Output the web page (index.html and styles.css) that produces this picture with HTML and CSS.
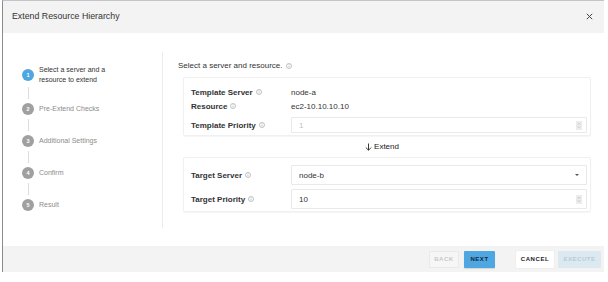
FILE: index.html
```html
<!DOCTYPE html>
<html>
<head>
<meta charset="utf-8">
<link rel="stylesheet" href="styles.css">
</head>
<body>
<div class="dialog">
  <div class="header">
    <span class="title">Extend Resource Hierarchy</span>
    <span class="close"><svg width="7" height="7" viewBox="0 0 7 7"><path d="M0.8 0.8L6.2 6.2M6.2 0.8L0.8 6.2" stroke="#444" stroke-width="1"/></svg></span>
  </div>
  <div class="body">
    <div class="columns">
      <ol class="stepper">
        <li class="step active"><span class="num">1</span><span class="slabel">Select a server and a<br>resource to extend</span></li>
        <li class="connector first"></li>
        <li class="step"><span class="num">2</span><span class="slabel">Pre-Extend Checks</span></li>
        <li class="connector"></li>
        <li class="step"><span class="num">3</span><span class="slabel">Additional Settings</span></li>
        <li class="connector"></li>
        <li class="step"><span class="num">4</span><span class="slabel">Confirm</span></li>
        <li class="connector"></li>
        <li class="step"><span class="num">5</span><span class="slabel">Result</span></li>
      </ol>
      <div class="content">
        <p class="intro">Select a server and resource. <svg class="info" width="6" height="6" viewBox="0 0 6 6"><circle cx="3" cy="3" r="2.5" fill="none" stroke="#999" stroke-width="0.6"/><path d="M3 2.6V4.4" stroke="#999" stroke-width="0.6"/><circle cx="3" cy="1.7" r="0.35" fill="#999"/></svg></p>
        <div class="card card1">
          <div class="lbl">Template Server <svg class="info" width="6" height="6" viewBox="0 0 6 6"><circle cx="3" cy="3" r="2.5" fill="none" stroke="#999" stroke-width="0.6"/><path d="M3 2.6V4.4" stroke="#999" stroke-width="0.6"/><circle cx="3" cy="1.7" r="0.35" fill="#999"/></svg></div>
          <div class="val">node-a</div>
          <div class="lbl">Resource <svg class="info" width="6" height="6" viewBox="0 0 6 6"><circle cx="3" cy="3" r="2.5" fill="none" stroke="#999" stroke-width="0.6"/><path d="M3 2.6V4.4" stroke="#999" stroke-width="0.6"/><circle cx="3" cy="1.7" r="0.35" fill="#999"/></svg></div>
          <div class="val">ec2-10.10.10.10</div>
          <div class="lbl field-lbl">Template Priority <svg class="info" width="6" height="6" viewBox="0 0 6 6"><circle cx="3" cy="3" r="2.5" fill="none" stroke="#999" stroke-width="0.6"/><path d="M3 2.6V4.4" stroke="#999" stroke-width="0.6"/><circle cx="3" cy="1.7" r="0.35" fill="#999"/></svg></div>
          <div class="input disabled"><span>1</span><span class="spin"><svg width="4" height="7" viewBox="0 0 4 7"><path d="M0.6 2.6L2 1.2L3.4 2.6M0.6 4.4L2 5.8L3.4 4.4" fill="none" stroke="#bbb" stroke-width="0.6"/></svg></span></div>
        </div>
        <div class="extend"><svg width="7" height="8" viewBox="0 0 7 8"><path d="M3.5 0.5V7.2M0.8 4.5L3.5 7.2L6.2 4.5" fill="none" stroke="#222" stroke-width="0.9"/></svg>Extend</div>
        <div class="card card2">
          <div class="lbl field-lbl">Target Server <svg class="info" width="6" height="6" viewBox="0 0 6 6"><circle cx="3" cy="3" r="2.5" fill="none" stroke="#999" stroke-width="0.6"/><path d="M3 2.6V4.4" stroke="#999" stroke-width="0.6"/><circle cx="3" cy="1.7" r="0.35" fill="#999"/></svg></div>
          <div class="input"><span>node-b</span><span class="caret"></span></div>
          <div class="lbl field-lbl">Target Priority <svg class="info" width="6" height="6" viewBox="0 0 6 6"><circle cx="3" cy="3" r="2.5" fill="none" stroke="#999" stroke-width="0.6"/><path d="M3 2.6V4.4" stroke="#999" stroke-width="0.6"/><circle cx="3" cy="1.7" r="0.35" fill="#999"/></svg></div>
          <div class="input"><span>10</span><span class="spin"><svg width="4" height="7" viewBox="0 0 4 7"><path d="M0.6 2.6L2 1.2L3.4 2.6M0.6 4.4L2 5.8L3.4 4.4" fill="none" stroke="#aaa" stroke-width="0.6"/></svg></span></div>
        </div>
      </div>
    </div>
  </div>
  <div class="footer">
    <span class="btn back">BACK</span>
    <span class="btn next">NEXT</span>
    <span class="btn cancel">CANCEL</span>
    <span class="btn execute">EXECUTE</span>
  </div>
</div>
</body>
</html>
```
FILE: styles.css
```css
* { box-sizing: border-box; }
html, body { margin: 0; padding: 0; background: #fff; }
body { font-family: "Liberation Sans", Arial, sans-serif; color: #333; width: 608px; height: 282px; overflow: hidden; }

.dialog {
  margin-left: 2px;
  width: 602px;
  height: 272px;
  border-left: 1px solid #8c8c8c;
  border-top: 1px solid #c4c4c4;
  display: flex;
  flex-direction: column;
}

.header {
  height: 32px;
  background: #f3f3f3;
  display: flex;
  align-items: center;
  justify-content: space-between;
  padding: 0 11px 2px 9px;
}
.title { font-size: 8.8px; color: #333; }
.close { display: flex; width: 7px; height: 7px; }

.body { height: 213px; }
.columns { display: flex; margin-top: 19px; height: 176px; }

.stepper {
  list-style: none;
  margin: 0;
  width: 160px;
  padding: 13px 0 0 19px;
  border-right: 1px solid #ececec;
}
.step { display: flex; align-items: center; gap: 5px; }
.num {
  width: 12px; height: 12px; border-radius: 50%;
  background: #a0a0a0; color: #fff;
  font-size: 5.5px; font-weight: bold;
  display: flex; align-items: center; justify-content: center;
  flex: none;
}
.step.active .num { background: #4ea7e1; }
.slabel { font-size: 7px; line-height: 9.5px; color: #8c8c8c; }
.step.active .slabel { color: #333; }
.connector { width: 1px; height: 12px; background: #dcdcdc; margin: 4px 0 4px 6px; }
.connector.first { margin-top: 3px; }

.content { flex: 1; padding: 8px 12px 0 15px; }
.intro { margin: 0 0 5px; font-size: 8px; line-height: 12px; color: #333; display: flex; align-items: center; gap: 3px; }
.info { display: inline-block; vertical-align: middle; }

.card {
  margin-left: 5px;
  width: 408px;
  border: 1px solid #f0f0f0;
  border-radius: 2px;
  box-shadow: 0 1px 1px rgba(0,0,0,0.04);
  display: grid;
  grid-template-columns: 100px 1fr;
  padding: 7px 3px 2px 7px;
}
.card1 { grid-template-rows: 14px 14px 20px; row-gap: 0; }
.card1 .field-lbl { margin-top: 4px; }
.card1 .input { margin-top: 4px; }
.card2 { grid-template-rows: 20px 20px; row-gap: 4px; }

.lbl { font-size: 8px; font-weight: bold; color: #333; display: flex; align-items: center; gap: 3px; }
.val { font-size: 8px; color: #333; display: flex; align-items: center; }

.input {
  border: 1px solid #e9e9e9;
  border-radius: 1px;
  display: flex; align-items: center; justify-content: space-between;
  padding: 0 4px 0 7px;
  font-size: 8px; color: #333;
}
.input.disabled { color: #c0c0c0; }
.spin { width: 6px; height: 9px; background: #ececec; display: flex; align-items: center; justify-content: center; }
.caret { width: 0; height: 0; border-left: 2.5px solid transparent; border-right: 2.5px solid transparent; border-top: 2.5px solid #555; margin-right: 3px; }

.extend {
  height: 21px;
  width: 408px;
  display: flex; align-items: center; justify-content: center; gap: 2px;
  font-size: 8px; color: #222;
}

.footer {
  height: 26px;
  background: #f3f3f3;
  display: flex;
  align-items: center;
  justify-content: flex-end;
  padding: 0 3px 0 0;
}
.btn {
  height: 17px;
  display: flex; align-items: center; justify-content: center;
  font-size: 6px; font-weight: bold; letter-spacing: 0.55px;
  border-radius: 1px;
}
.back { width: 30px; background: #f6f6f6; border: 1px solid #e9e9e9; color: #c8c8c8; }
.next { width: 31px; margin-left: 5px; background: #4ea7e1; color: #15263a; box-shadow: 0 1px 1px rgba(0,0,0,0.12); }
.cancel { width: 38px; margin-left: 21px; background: #fff; color: #222; box-shadow: 0 0 1px rgba(0,0,0,0.2); }
.execute { width: 43px; margin-left: 4px; background: #dde9f1; color: #b8c9d6; }
```
